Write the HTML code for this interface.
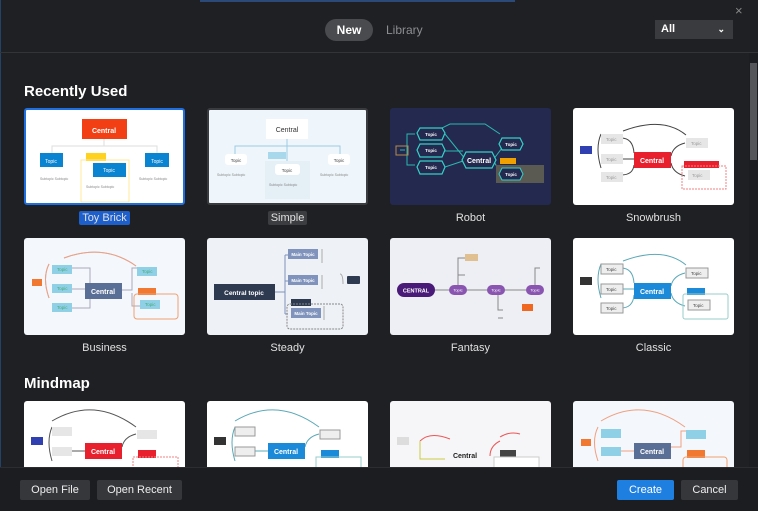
<!DOCTYPE html>
<html><head><meta charset="utf-8"><style>
*{margin:0;padding:0;box-sizing:border-box}
body{width:758px;height:511px;background:#1f2023;font-family:"Liberation Sans",sans-serif;position:relative;overflow:hidden;color:#ddd}
.a{position:absolute}
.th{position:absolute;width:161px;height:97px;border-radius:3px;overflow:hidden}
.th svg{display:block}
.lb{position:absolute;width:161px;text-align:center;font-size:11px;color:#e0e0e0}
.lb span{padding:1px 3px;border-radius:2px}
h2{position:absolute;left:24px;font-size:15px;color:#fff;font-weight:bold}
.btn{position:absolute;top:480px;height:20px;line-height:20px;font-size:11px;color:#eee;background:#36373b;text-align:center;border-radius:2px}
text{font-family:"Liberation Sans",sans-serif}
</style></head><body>
<div class="a" style="left:200px;top:0;width:315px;height:2px;background:#2c4a78"></div>
<div class="a" style="left:0;top:0;width:1px;height:511px;background:#22426a"></div>
<div class="a" style="left:325px;top:19px;width:48px;height:22px;border-radius:11px;background:#4a4b4f;color:#fff;font-weight:bold;font-size:12px;text-align:center;line-height:22px">New</div>
<div class="a" style="left:386px;top:23px;font-size:12px;color:#8d8e92">Library</div>
<div class="a" style="left:655px;top:20px;width:78px;height:19px;background:#3a3b3f;font-size:11px;font-weight:bold;color:#fff;line-height:19px;padding-left:6px">All<span style="position:absolute;right:8px;font-size:9px">&#8964;</span></div>
<div class="a" style="left:735px;top:3px;font-size:13px;color:#888">×</div>
<div class="a" style="left:0;top:52px;width:758px;height:1px;background:#333438"></div>
<div class="a" style="left:749px;top:53px;width:9px;height:414px;background:#1c1d20"></div>
<div class="a" style="left:750px;top:63px;width:7px;height:97px;background:#55565a"></div>

<h2 style="top:83px">Recently Used</h2>
<h2 style="top:375px">Mindmap</h2>

<!-- Toy Brick -->
<div class="th" style="left:24px;top:108px;background:#fff;border:2px solid #1f6fe0">
<svg width="157" height="93" viewBox="2 2 157 93"><path d="M80 31V38M28 45V38H133V45" stroke="#ddd" fill="none"/>
<rect x="58" y="11" width="45" height="20" fill="#f33f14"/><text x="80" y="25" font-size="7" fill="#fff" text-anchor="middle" font-weight="bold">Central</text>
<rect x="16" y="45" width="23" height="14" fill="#0a84d0"/><rect x="121" y="45" width="24" height="14" fill="#0a84d0"/>
<rect x="62" y="45" width="20" height="8" fill="#ffd21f"/><rect x="57" y="52" width="48" height="42" fill="none" stroke="#ffe89a"/>
<rect x="69" y="55" width="33" height="14" fill="#0a84d0"/>
<text x="27" y="55" font-size="5" fill="#fff" text-anchor="middle">Topic</text><text x="133" y="55" font-size="5" fill="#fff" text-anchor="middle">Topic</text><text x="85" y="64" font-size="5" fill="#fff" text-anchor="middle">Topic</text>
<text x="16" y="72" font-size="3.5" fill="#888">Subtopic   Subtopic</text><text x="115" y="72" font-size="3.5" fill="#888">Subtopic   Subtopic</text><text x="62" y="80" font-size="3.5" fill="#888">Subtopic   Subtopic</text></svg></div>
<div class="lb" style="left:24px;top:212px"><span style="background:#1d5fcc">Toy Brick</span></div>

<!-- Simple -->
<div class="th" style="left:207px;top:108px;background:#eef6fb;border:2px solid #3a3b3f">
<svg width="157" height="93" viewBox="2 2 157 93"><path d="M80 31V55M28 48V38H133V48" stroke="#9ccbe0" fill="none"/>
<rect x="59" y="11" width="42" height="20" fill="#fff"/><text x="80" y="24" font-size="7" fill="#333" text-anchor="middle">Central</text>
<rect x="18" y="46" width="22" height="11" rx="3" fill="#fff"/><rect x="121" y="46" width="22" height="11" rx="3" fill="#fff"/>
<rect x="61" y="44" width="18" height="7" fill="#a7d8ec"/><rect x="58" y="53" width="45" height="38" fill="#e4eff6"/><rect x="68" y="56" width="25" height="11" rx="3" fill="#fff"/>
<text x="29" y="54" font-size="4.5" fill="#444" text-anchor="middle">Topic</text><text x="132" y="54" font-size="4.5" fill="#444" text-anchor="middle">Topic</text><text x="80" y="64" font-size="4.5" fill="#444" text-anchor="middle">Topic</text>
<text x="10" y="68" font-size="3.5" fill="#888">Subtopic   Subtopic</text><text x="113" y="68" font-size="3.5" fill="#888">Subtopic   Subtopic</text><text x="62" y="78" font-size="3.5" fill="#888">Subtopic   Subtopic</text></svg></div>
<div class="lb" style="left:207px;top:212px"><span style="background:#3c3d41">Simple</span></div>

<!-- Robot -->
<div class="th" style="left:390px;top:108px;background:#23294f">
<svg width="161" height="97"><path d="M15 42H10M25 26H17V57H25M55 26L76 52M55 43H73M55 59L76 52M103 52L115 36M103 52L113 69M40 26L60 16H95L110 26" stroke="#2bb8b0" fill="none"/>
<rect x="6" y="38" width="12" height="9" fill="none" stroke="#b88a4a"/>
<g fill="#23294f" stroke="#35d0c8" stroke-width="1.2"><path d="M30 20H52L55 25L52 32H30L27 25Z"/><path d="M30 36H52L55 42L52 49H30L27 42Z"/><path d="M30 53H52L55 59L52 66H30L27 59Z"/><path d="M76 44H102L106 52L102 60H76L72 52Z"/><path d="M112 30H130L133 36L130 42H112L109 36Z"/></g>
<rect x="110" y="50" width="16" height="6" fill="#f0a000"/><rect x="106" y="57" width="48" height="18" fill="#5a5a52"/><path d="M112 60H130L133 66L130 72H112L109 66Z" fill="#23294f" stroke="#35d0c8"/>
<g font-size="4.5" fill="#fff" text-anchor="middle" font-weight="bold"><text x="41" y="28">Topic</text><text x="41" y="44">Topic</text><text x="41" y="61">Topic</text><text x="121" y="38">Topic</text><text x="121" y="68">Topic</text></g>
<text x="89" y="55" font-size="7" fill="#fff" text-anchor="middle" font-weight="bold">Central</text></svg></div>
<div class="lb" style="left:390px;top:212px">Robot</div>

<!-- Snowbrush -->
<div class="th" style="left:573px;top:108px;background:#fff">
<svg width="161" height="97"><path d="M28 26Q22 40 28 60M48 30Q60 30 61 45M48 51H61M48 67Q60 67 61 57M98 48Q100 38 112 35M98 55Q100 65 112 68M50 23Q90 8 113 27" stroke="#444" fill="none" stroke-dasharray="0"/>
<rect x="7" y="38" width="12" height="8" fill="#3040b0"/>
<g fill="#e6e6e6"><rect x="28" y="26" width="22" height="10"/><rect x="28" y="46" width="22" height="10"/><rect x="28" y="64" width="22" height="10"/><rect x="113" y="30" width="22" height="10"/><rect x="115" y="62" width="22" height="10"/></g>
<rect x="111" y="53" width="35" height="7" fill="#e8202e"/><rect x="109" y="58" width="44" height="23" fill="none" stroke="#f08080" stroke-dasharray="2 1"/>
<rect x="61" y="44" width="37" height="16" fill="#e8202e"/><text x="79" y="55" font-size="7" fill="#fff" text-anchor="middle" font-weight="bold">Central</text>
<g font-size="4.5" fill="#999"><text x="33" y="33">Topic</text><text x="33" y="53">Topic</text><text x="33" y="71">Topic</text><text x="118" y="37">Topic</text><text x="119" y="69">Topic</text></g></svg></div>
<div class="lb" style="left:573px;top:212px">Snowbrush</div>

<!-- Business -->
<div class="th" style="left:24px;top:238px;background:#f4f7fb">
<svg width="161" height="97"><path d="M25 26Q18 40 25 60M48 30H66V45M48 51H61M48 70H66V60M98 52H108V30H118M108 55V68H118M40 20Q80 5 112 28" stroke="#aab" fill="none"/>
<path d="M25 26Q18 40 25 60M40 20Q80 5 112 28" stroke="#f0a080" fill="none"/>
<rect x="8" y="41" width="10" height="7" fill="#f07830"/>
<g fill="#8fd0e6"><rect x="28" y="27" width="20" height="9"/><rect x="28" y="46" width="20" height="9"/><rect x="28" y="65" width="20" height="9"/><rect x="113" y="29" width="20" height="9"/><rect x="116" y="62" width="20" height="9"/></g>
<rect x="114" y="50" width="18" height="7" fill="#f07830"/><rect x="110" y="56" width="44" height="25" rx="3" fill="none" stroke="#f0a070"/>
<rect x="61" y="45" width="37" height="16" fill="#5a6f96"/><text x="79" y="56" font-size="7" fill="#fff" text-anchor="middle" font-weight="bold">Central</text>
<g font-size="4.5" fill="#4a7" ><text x="33" y="33">Topic</text><text x="33" y="52">Topic</text><text x="33" y="71">Topic</text><text x="118" y="35">Topic</text><text x="121" y="68">Topic</text></g></svg></div>
<div class="lb" style="left:24px;top:342px">Business</div>

<!-- Steady -->
<div class="th" style="left:207px;top:238px;background:#eef1f6">
<svg width="161" height="97"><path d="M68 54H78M78 17V76M78 17H81M78 43H81M78 76H81" stroke="#7f93bc" fill="none"/>
<rect x="7" y="46" width="61" height="16" fill="#2e3a50"/><text x="37" y="57" font-size="6.5" fill="#fff" text-anchor="middle" font-weight="bold">Central topic</text>
<g fill="#7f93bc"><rect x="81" y="11" width="30" height="10"/><rect x="81" y="37" width="30" height="10"/><rect x="84" y="70" width="30" height="10"/></g>
<rect x="84" y="61" width="20" height="7" fill="#2e3a50"/><rect x="80" y="66" width="56" height="25" rx="3" fill="none" stroke="#888" stroke-dasharray="2 1"/>
<rect x="140" y="38" width="13" height="8" rx="1" fill="#2e3a50"/>
<g font-size="4.5" fill="#fff" text-anchor="middle" font-weight="bold"><text x="96" y="18">Main Topic</text><text x="96" y="44">Main Topic</text><text x="99" y="77">Main Topic</text></g>
<path d="M115 11V25M115 37V51M117 68V82M133 36Q136 36 136 46" stroke="#aaa" fill="none"/></svg></div>
<div class="lb" style="left:207px;top:342px">Steady</div>

<!-- Fantasy -->
<div class="th" style="left:390px;top:238px;background:#eeeff4">
<svg width="161" height="97"><path d="M45 52H140M68 52V20H75M68 37H75M108 52V72H113M108 80H113M145 52V30H150" stroke="#888" fill="none"/>
<rect x="75" y="16" width="13" height="7" fill="#e0c090"/><rect x="132" y="66" width="11" height="7" fill="#f06820"/>
<rect x="7" y="45" width="38" height="14" rx="7" fill="#4a1a78"/><text x="26" y="54.5" font-size="5.5" fill="#fff" text-anchor="middle" font-weight="bold">CENTRAL</text>
<g fill="#8a55b0"><rect x="59" y="47" width="18" height="10" rx="5"/><rect x="97" y="47" width="18" height="10" rx="5"/><rect x="136" y="47" width="18" height="10" rx="5"/></g>
<g font-size="4" fill="#fff" text-anchor="middle"><text x="68" y="53.5">Topic</text><text x="106" y="53.5">Topic</text><text x="145" y="53.5">Topic</text></g></svg></div>
<div class="lb" style="left:390px;top:342px">Fantasy</div>

<!-- Classic -->
<div class="th" style="left:573px;top:238px;background:#fff">
<svg width="161" height="97"><path d="M28 26Q22 40 28 60M48 30Q60 30 61 45M48 51H61M48 70Q60 70 61 57M98 48Q100 38 112 35M98 55Q100 65 112 68M50 23Q90 8 113 27" stroke="#5aa8b8" fill="none"/>
<rect x="7" y="39" width="12" height="8" fill="#333"/>
<g fill="#eee" stroke="#999"><rect x="28" y="26" width="22" height="10"/><rect x="28" y="46" width="22" height="10"/><rect x="28" y="65" width="22" height="10"/><rect x="113" y="30" width="22" height="10"/><rect x="115" y="62" width="22" height="10"/></g>
<rect x="114" y="50" width="18" height="7" fill="#1b8ad8"/><rect x="110" y="56" width="45" height="25" rx="2" fill="none" stroke="#9cc"/>
<rect x="61" y="45" width="37" height="16" fill="#1b8ad8"/><text x="79" y="56" font-size="7" fill="#fff" text-anchor="middle" font-weight="bold">Central</text>
<g font-size="4.5" fill="#444"><text x="33" y="33">Topic</text><text x="33" y="53">Topic</text><text x="33" y="72">Topic</text><text x="118" y="37">Topic</text><text x="120" y="69">Topic</text></g></svg></div>
<div class="lb" style="left:573px;top:342px">Classic</div>

<!-- Row 3 -->
<div class="th" style="left:24px;top:401px;height:66px;border-radius:3px 3px 0 0;background:#fff">
<svg width="161" height="66"><path d="M28 26Q22 40 28 60M48 50H61M98 46Q100 36 112 33M28 20Q70 -5 112 26" stroke="#555" fill="none"/>
<rect x="7" y="36" width="12" height="8" fill="#3040b0"/><g fill="#e6e6e6"><rect x="28" y="26" width="20" height="9"/><rect x="28" y="46" width="20" height="9"/><rect x="113" y="29" width="20" height="9"/></g>
<rect x="114" y="49" width="18" height="8" fill="#e8202e"/><rect x="109" y="56" width="45" height="15" fill="none" stroke="#f08080" stroke-dasharray="2 1"/>
<rect x="61" y="42" width="37" height="16" fill="#e8202e"/><text x="79" y="53" font-size="7" fill="#fff" text-anchor="middle" font-weight="bold">Central</text></svg></div>
<div class="th" style="left:207px;top:401px;height:66px;border-radius:3px 3px 0 0;background:#fff">
<svg width="161" height="66"><path d="M28 26Q22 40 28 60M48 50H61M98 46Q100 36 112 33M28 20Q70 -5 112 26" stroke="#5aa8b8" fill="none"/>
<rect x="7" y="36" width="12" height="8" fill="#333"/><g fill="#eee" stroke="#999"><rect x="28" y="26" width="20" height="9"/><rect x="28" y="46" width="20" height="9"/><rect x="113" y="29" width="20" height="9"/></g>
<rect x="114" y="49" width="18" height="8" fill="#1b8ad8"/><rect x="109" y="56" width="45" height="15" fill="none" stroke="#9cc"/>
<rect x="61" y="42" width="37" height="16" fill="#1b8ad8"/><text x="79" y="53" font-size="7" fill="#fff" text-anchor="middle" font-weight="bold">Central</text></svg></div>
<div class="th" style="left:390px;top:401px;height:66px;border-radius:3px 3px 0 0;background:#f6f6f8">
<svg width="161" height="66"><path d="M30 40Q40 30 60 38M40 58H55M110 36Q120 30 130 33M100 55Q100 45 110 40" stroke="#e55" fill="none"/><path d="M30 40V58H55" stroke="#cc4" fill="none"/>
<rect x="7" y="36" width="12" height="8" fill="#ddd"/><rect x="110" y="49" width="16" height="8" fill="#444"/><rect x="104" y="56" width="45" height="15" fill="#fff" stroke="#ccc"/>
<text x="75" y="57" font-size="7" fill="#222" text-anchor="middle" font-weight="bold">Central</text></svg></div>
<div class="th" style="left:573px;top:401px;height:66px;border-radius:3px 3px 0 0;background:#f4f7fb">
<svg width="161" height="66"><path d="M25 26Q18 40 25 60M48 50H61M98 46H108V30H118M28 20Q70 -5 112 26" stroke="#f0a080" fill="none"/>
<rect x="8" y="38" width="10" height="7" fill="#f07830"/><g fill="#8fd0e6"><rect x="28" y="28" width="20" height="9"/><rect x="28" y="46" width="20" height="9"/><rect x="113" y="29" width="20" height="9"/></g>
<rect x="114" y="49" width="18" height="8" fill="#f07830"/><rect x="110" y="56" width="44" height="15" rx="3" fill="none" stroke="#f0a070"/>
<rect x="61" y="42" width="37" height="16" fill="#5a6f96"/><text x="79" y="53" font-size="7" fill="#fff" text-anchor="middle" font-weight="bold">Central</text></svg></div>

<!-- Footer -->
<div class="a" style="left:0;top:467px;width:758px;height:44px;background:#1c1d20;border-top:1px solid #2c2d31"></div>
<div class="btn" style="left:20px;width:70px">Open File</div>
<div class="btn" style="left:97px;width:85px">Open Recent</div>
<div class="btn" style="left:617px;width:57px;background:#1e7fe0;color:#fff">Create</div>
<div class="btn" style="left:681px;width:57px">Cancel</div>
</body></html>
